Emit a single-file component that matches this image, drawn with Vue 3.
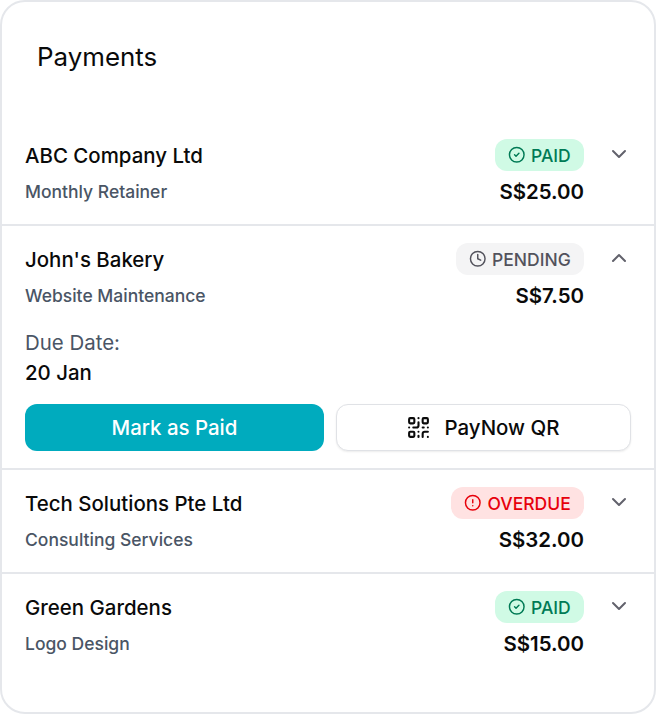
<template>
  <div class="card">
    <h1 class="title">Payments</h1>
    <div class="list">
      <div v-for="p in payments" :key="p.name" class="row">
        <div class="head">
          <div class="info">
            <div class="name">{{ p.name }}</div>
            <div class="desc">{{ p.desc }}</div>
          </div>
          <div class="side">
            <span class="badge" :class="p.status">
              <svg v-if="p.status === 'paid'" class="ico" viewBox="0 0 24 24"><circle cx="12" cy="12" r="10" /><path d="m9 12 2 2 4-4" /></svg>
              <svg v-else-if="p.status === 'pending'" class="ico" viewBox="0 0 24 24"><circle cx="12" cy="12" r="10" /><path d="M12 6v6l4 2" /></svg>
              <svg v-else class="ico" viewBox="0 0 24 24"><circle cx="12" cy="12" r="10" /><path d="M12 8v4" /><path d="M12 16h.01" /></svg>
              {{ p.status.toUpperCase() }}
            </span>
            <div class="amount">{{ p.amount }}</div>
          </div>
          <svg class="chev" viewBox="0 0 24 24"><path :d="p.open ? 'm6 15 6-6 6 6' : 'm6 9 6 6 6-6'" /></svg>
        </div>
        <div v-if="p.open" class="more">
          <div class="due-label">Due Date:</div>
          <div class="due-value">{{ p.due }}</div>
          <div class="actions">
            <button class="btn primary">Mark as Paid</button>
            <button class="btn outline">
              <svg class="qr" viewBox="0 0 24 24">
                <rect x="3" y="3" width="5" height="5" rx="1" />
                <rect x="16" y="3" width="5" height="5" rx="1" />
                <rect x="3" y="16" width="5" height="5" rx="1" />
                <path d="M21 16h-3a2 2 0 0 0-2 2v3" />
                <path d="M21 21v.01" />
                <path d="M12 7v3a2 2 0 0 1-2 2H7" />
                <path d="M3 12h.01" />
                <path d="M12 3h.01" />
                <path d="M12 16v.01" />
                <path d="M16 12h1" />
                <path d="M21 12v.01" />
                <path d="M12 21v-1" />
              </svg>
              PayNow QR
            </button>
          </div>
        </div>
      </div>
    </div>
  </div>
</template>

<script setup>
const payments = [
  { name: 'ABC Company Ltd', desc: 'Monthly Retainer', status: 'paid', amount: 'S$25.00' },
  { name: "John's Bakery", desc: 'Website Maintenance', status: 'pending', amount: 'S$7.50', open: true, due: '20 Jan' },
  { name: 'Tech Solutions Pte Ltd', desc: 'Consulting Services', status: 'overdue', amount: 'S$32.00' },
  { name: 'Green Gardens', desc: 'Logo Design', status: 'paid', amount: 'S$15.00' }
]
</script>

<style scoped>
.card {
  box-sizing: border-box;
  width: 656px;
  height: 714px;
  background: #fff;
  border: 2px solid #e5e7eb;
  border-radius: 25px;
  font-family: Inter, "Liberation Sans", sans-serif;
  color: #0a0a0a;
  overflow: hidden;
}

.title {
  margin: 0;
  padding: 38px 35px 0;
  font-size: 25.9px;
  line-height: 34px;
  font-weight: 400;
}

.list {
  margin-top: 48px;
}

.row {
  padding: 15px 23px 17px;
  border-bottom: 2px solid #e5e7eb;
}

.row:last-child {
  border-bottom: none;
}

.head {
  display: flex;
  align-items: flex-start;
}

.info {
  flex: 1;
  padding-top: 4px;
}

.name {
  font-size: 20.45px;
  line-height: 30px;
  font-weight: 500;
}

.desc {
  margin-top: 9px;
  font-size: 17.5px;
  line-height: 24px;
  font-weight: 500;
  color: #4a5565;
}

.side {
  display: flex;
  flex-direction: column;
  align-items: flex-end;
  padding-top: 2px;
}

.badge {
  display: flex;
  align-items: center;
  gap: 6px;
  height: 32px;
  padding: 0 13.25px 0 13px;
  border-radius: 12px;
  font-size: 17.5px;
  font-weight: 500;
}

.badge.paid {
  background: #d0fae5;
  color: #007a55;
}

.badge.pending {
  background: #f4f4f5;
  color: #52525c;
}

.badge.overdue {
  background: #ffe2e2;
  color: #e7000b;
}

.ico {
  width: 17.5px;
  height: 17.5px;
  fill: none;
  stroke: currentColor;
  stroke-width: 2;
  stroke-linecap: round;
  stroke-linejoin: round;
}

.amount {
  margin-top: 6px;
  font-size: 20.45px;
  line-height: 30px;
  font-weight: 600;
}

.chev {
  width: 24px;
  height: 24px;
  margin: 5px 0 0 23px;
  fill: none;
  stroke: #62626c;
  stroke-width: 2;
  stroke-linecap: round;
  stroke-linejoin: round;
}

.more {
  margin-top: 17px;
}

.due-label {
  font-size: 20.45px;
  line-height: 30px;
  color: #4a5565;
}

.due-value {
  font-size: 20.45px;
  line-height: 30px;
  font-weight: 500;
}

.actions {
  display: flex;
  gap: 12px;
  margin-top: 16px;
}

.btn {
  display: flex;
  align-items: center;
  justify-content: center;
  height: 47px;
  border-radius: 12px;
  font-family: inherit;
  font-size: 20.45px;
  font-weight: 500;
}

.primary {
  width: 299px;
  border: none;
  background: #00abbe;
  color: #fff;
}

.outline {
  gap: 14px;
  width: 295px;
  padding: 0 8px 0 6px;
  border: 1px solid #e0e2e6;
  background: #fff;
  color: #0a0a0a;
  box-shadow: 0 1px 2px rgba(0, 0, 0, 0.08);
}

.qr {
  width: 25px;
  height: 25px;
  fill: none;
  stroke: #0a0a0a;
  stroke-width: 2;
  stroke-linecap: round;
  stroke-linejoin: round;
}
</style>
